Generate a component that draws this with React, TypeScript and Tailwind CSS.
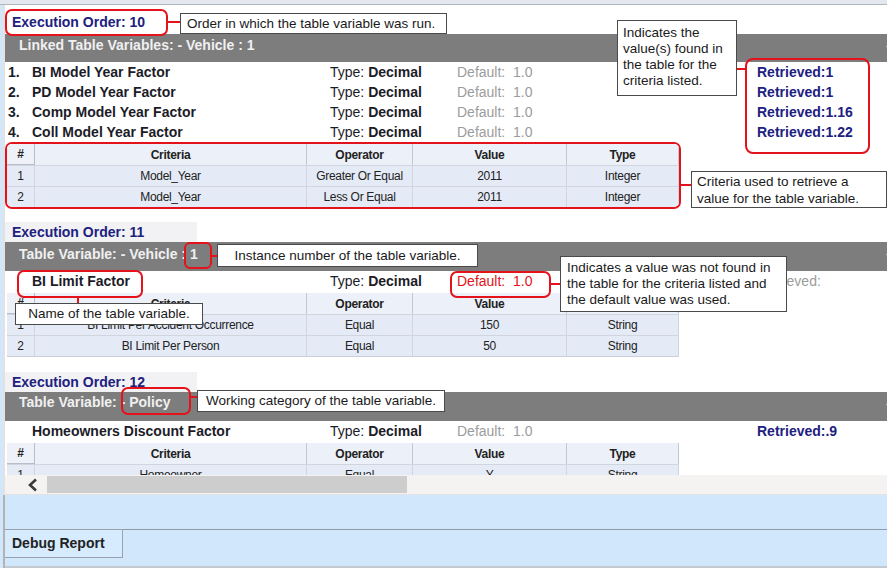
import React from "react";

type Cell = string;

function ExecOrder({ n, tall }: { n: string; tall?: boolean }) {
  return (
    <div
      className={
        tall
          ? "h-[29px] pt-[8px] pl-[7px] text-[14px] leading-[18px] font-bold text-[#20207f]"
          : "w-[192px] h-[20px] bg-[#f2f2f4] pl-[7px] pt-[1px] text-[14px] leading-[18px] font-bold text-[#20207f]"
      }
    >
      Execution Order: {n}
    </div>
  );
}

function Bar({ children, h }: { children: React.ReactNode; h: string }) {
  return (
    <div
      className={
        h +
        " relative bg-[#7d7d7d] pl-[14px] text-[14px] leading-[18px] font-bold text-[#f0f0f0] whitespace-pre"
      }
    >
      {children}
      <span className="absolute right-[-4px] top-[2px] font-normal text-[#e8e8e8]">{"{"}</span>
    </div>
  );
}

function VarRow({
  num,
  name,
  def,
  ret,
}: {
  num?: string;
  name: string;
  def: React.ReactNode;
  ret: React.ReactNode;
}) {
  return (
    <div className="flex h-[20px] items-center text-[14px] leading-[18px] text-[#1c1c28]">
      <div className="w-[27px] pl-[3px] font-bold">{num}</div>
      <div className="w-[298px] font-bold">{name}</div>
      <div className="w-[127px] whitespace-pre">
        Type: <span className="font-bold">Decimal</span>
      </div>
      <div className="w-[300px] whitespace-pre">{def}</div>
      <div className="font-bold text-[#20207f]">{ret}</div>
    </div>
  );
}

function CriteriaTable({ rows, red }: { rows: Cell[][]; red?: boolean }) {
  const heads = ["#", "Criteria", "Operator", "Value", "Type"];
  return (
    <div
      className={
        red
          ? "w-[676px] rounded-[7px] border-2 border-[#e3121b] overflow-hidden"
          : "w-[676px] border-2 border-transparent"
      }
    >
      <div
        className={
          (red ? "" : "border-b border-[#c9ced8] ") +
          "grid grid-cols-[28px_272px_106px_154px_112px] bg-[#e5ebf6] text-[12px] tracking-[-0.3px] text-[#222]"
        }
      >
        {heads.map((h, i) => (
          <div
            key={h}
            className={
              i === 0
                ? "h-[21px] flex items-center justify-center font-bold bg-[#eef1f7] border-r border-b border-[#b8bec8]"
                : "h-[21px] flex items-center justify-center font-bold bg-[#ecf0f8] border-r border-[#c2c8d2]"
            }
          >
            {h}
          </div>
        ))}
        {rows.flat().map((c, i) => (
          <div
            key={i}
            className="h-[21px] flex items-center justify-center border-t border-r border-[#d0d5de]"
          >
            {c}
          </div>
        ))}
      </div>
    </div>
  );
}

function Note({ className, children }: { className: string; children: React.ReactNode }) {
  return (
    <div className={"bg-white border border-[#4a4a4a] text-[13.5px] text-[#1a1a1a] " + className}>
      {children}
    </div>
  );
}

const grayDef = <span className="text-[#9c9c9c]">Default:  1.0</span>;

export default function App() {
  return (
    <div className="relative w-[887px] h-[568px] overflow-hidden bg-[#d0e7fc] font-['Liberation_Sans',Arial,sans-serif] text-[#1f1f1f]">
      <div className="h-[5px] bg-[#e3e8ef] border-b border-[#aeb6c0]" />

      <div className="ml-[3px] border-l-2 border-[#b3b3b3] bg-white border-b border-[#e2e2e2]">
        <div className="h-[470px] overflow-hidden">
          {/* Execution order 10 */}
          <ExecOrder n="10" tall />
          <Bar h="h-[28px] pt-[2px]">Linked Table Variables: - Vehicle : 1</Bar>
          <VarRow num="1." name="BI Model Year Factor" def={grayDef} ret="Retrieved:1" />
          <VarRow num="2." name="PD Model Year Factor" def={grayDef} ret="Retrieved:1" />
          <VarRow num="3." name="Comp Model Year Factor" def={grayDef} ret="Retrieved:1.16" />
          <VarRow num="4." name="Coll Model Year Factor" def={grayDef} ret="Retrieved:1.22" />
          <CriteriaTable
            red
            rows={[
              ["1", "Model_Year", "Greater Or Equal", "2011", "Integer"],
              ["2", "Model_Year", "Less Or Equal", "2011", "Integer"],
            ]}
          />

          {/* Execution order 11 */}
          <div className="mt-[13px]">
            <ExecOrder n="11" />
          </div>
          <Bar h="h-[29px] pt-[3px]">Table Variable: - Vehicle : 1</Bar>
          <VarRow
            name="BI Limit Factor"
            def={<span className="text-[#e3121b]">Default:  1.0</span>}
            ret={<span className="font-normal text-[#9c9c9c]">Retrieved:</span>}
          />
          <CriteriaTable
            rows={[
              ["1", "BI Limit Per Accident Occurrence", "Equal", "150", "String"],
              ["2", "BI Limit Per Person", "Equal", "50", "String"],
            ]}
          />

          {/* Execution order 12 */}
          <div className="mt-[13px]">
            <ExecOrder n="12" />
          </div>
          <Bar h="h-[29px] pt-[1px]">Table Variable: - Policy</Bar>
          <VarRow name="Homeowners Discount Factor" def={grayDef} ret="Retrieved:.9" />
          <CriteriaTable rows={[["1", "Homeowner", "Equal", "Y", "String"]]} />
        </div>

        {/* horizontal scrollbar */}
        <div className="flex h-[19px] items-center bg-[#f5f2f2]">
          <svg className="ml-[22px] w-[12px] h-[14px]" viewBox="0 0 12 14">
            <path d="M9 1.5 L3 7 L9 12.5" fill="none" stroke="#3a3a3a" strokeWidth="2.6" />
          </svg>
          <div className="ml-[8px] w-[360px] h-[17px] bg-[#cdcdcd]" />
        </div>
      </div>

      {/* bottom tab strip */}
      <div className="ml-[3px] border-l-2 border-[#b3b3b3] h-[73px] flex flex-col">
        <div className="h-[34px]" />
        <div className="flex h-[29px]">
          <div className="w-[118px] border-t border-r border-b border-[#9aa3ad] bg-[#d6ebfd] pl-[7px] flex items-center text-[14px] font-bold text-[#222]">
            Debug Report
          </div>
          <div className="flex-1 border-t border-[#8f9aa5]" />
        </div>
        <div className="flex-1 border-b-2 border-[#c2c9d0]" />
      </div>

      {/* annotations laid over the report */}
      <div className="pointer-events-none">
        {/* execution order */}
        <div className="absolute left-[5px] top-[9px] flex items-start">
          <div className="w-[163px] h-[27px] rounded-[7px] border-2 border-[#e3121b]" />
          <div className="mt-[12px] w-[12px] h-[2px] bg-[#e3121b]" />
          <Note className="mt-[4px] w-[267px] h-[21px] pl-[6px] leading-[19px] whitespace-nowrap">
            Order in which the table variable was run.
          </Note>
        </div>

        {/* retrieved */}
        <div className="absolute left-[617px] top-[20px] flex items-start">
          <Note className="w-[120px] h-[76px] pl-[5px] pt-[4px] leading-[16px]">
            Indicates the
            <br />
            value(s) found in
            <br />
            the table for the
            <br />
            criteria listed.
          </Note>
          <div className="mt-[48px] w-[8px] h-[2px] bg-[#e3121b]" />
          <div className="mt-[38px] w-[125px] h-[96px] rounded-[8px] border-2 border-[#e3121b]" />
        </div>

        {/* criteria */}
        <div className="absolute left-[681px] top-[171px] flex items-start">
          <div className="mt-[13px] w-[10px] h-[2px] bg-[#e3121b]" />
          <Note className="w-[196px] h-[37px] pl-[5px] pt-[1px] leading-[17px]">
            Criteria used to retrieve a
            <br />
            value for the table variable.
          </Note>
        </div>

        {/* instance */}
        <div className="absolute left-[184px] top-[242px] flex items-center">
          <div className="w-[28px] h-[27px] rounded-[6px] border-2 border-[#e3121b]" />
          <div className="w-[5px] h-[2px] bg-[#e3121b]" />
          <Note className="w-[261px] h-[23px] text-center leading-[21px] whitespace-nowrap">
            Instance number of the table variable.
          </Note>
        </div>

        {/* name */}
        <div className="absolute left-[15px] top-[270px] flex flex-col items-start">
          <div className="ml-[2px] w-[126px] h-[28px] rounded-[7px] border-2 border-[#e3121b]" />
          <div className="ml-[62px] w-[2px] h-[5px] bg-[#e3121b]" />
          <Note className="w-[188px] h-[22px] text-center leading-[20px] whitespace-nowrap">
            Name of the table variable.
          </Note>
        </div>

        {/* default */}
        <div className="absolute left-[450px] top-[256px] flex items-center">
          <div className="w-[101px] h-[27px] rounded-[7px] border-2 border-[#e3121b]" />
          <div className="w-[9px] h-[2px] bg-[#e3121b]" />
          <Note className="w-[227px] h-[56px] pl-[6px] pt-[3px] leading-[16px]">
            Indicates a value was not found in
            <br />
            the table for the criteria listed and
            <br />
            the default value was used.
          </Note>
        </div>

        {/* category */}
        <div className="absolute left-[121px] top-[387px] flex items-start">
          <div className="w-[70px] h-[28px] rounded-[7px] border-2 border-[#e3121b]" />
          <div className="mt-[9px] w-[6px] h-[2px] bg-[#e3121b]" />
          <Note className="mt-[3px] w-[248px] h-[22px] text-center leading-[20px] whitespace-nowrap">
            Working category of the table variable.
          </Note>
        </div>
      </div>
    </div>
  );
}
